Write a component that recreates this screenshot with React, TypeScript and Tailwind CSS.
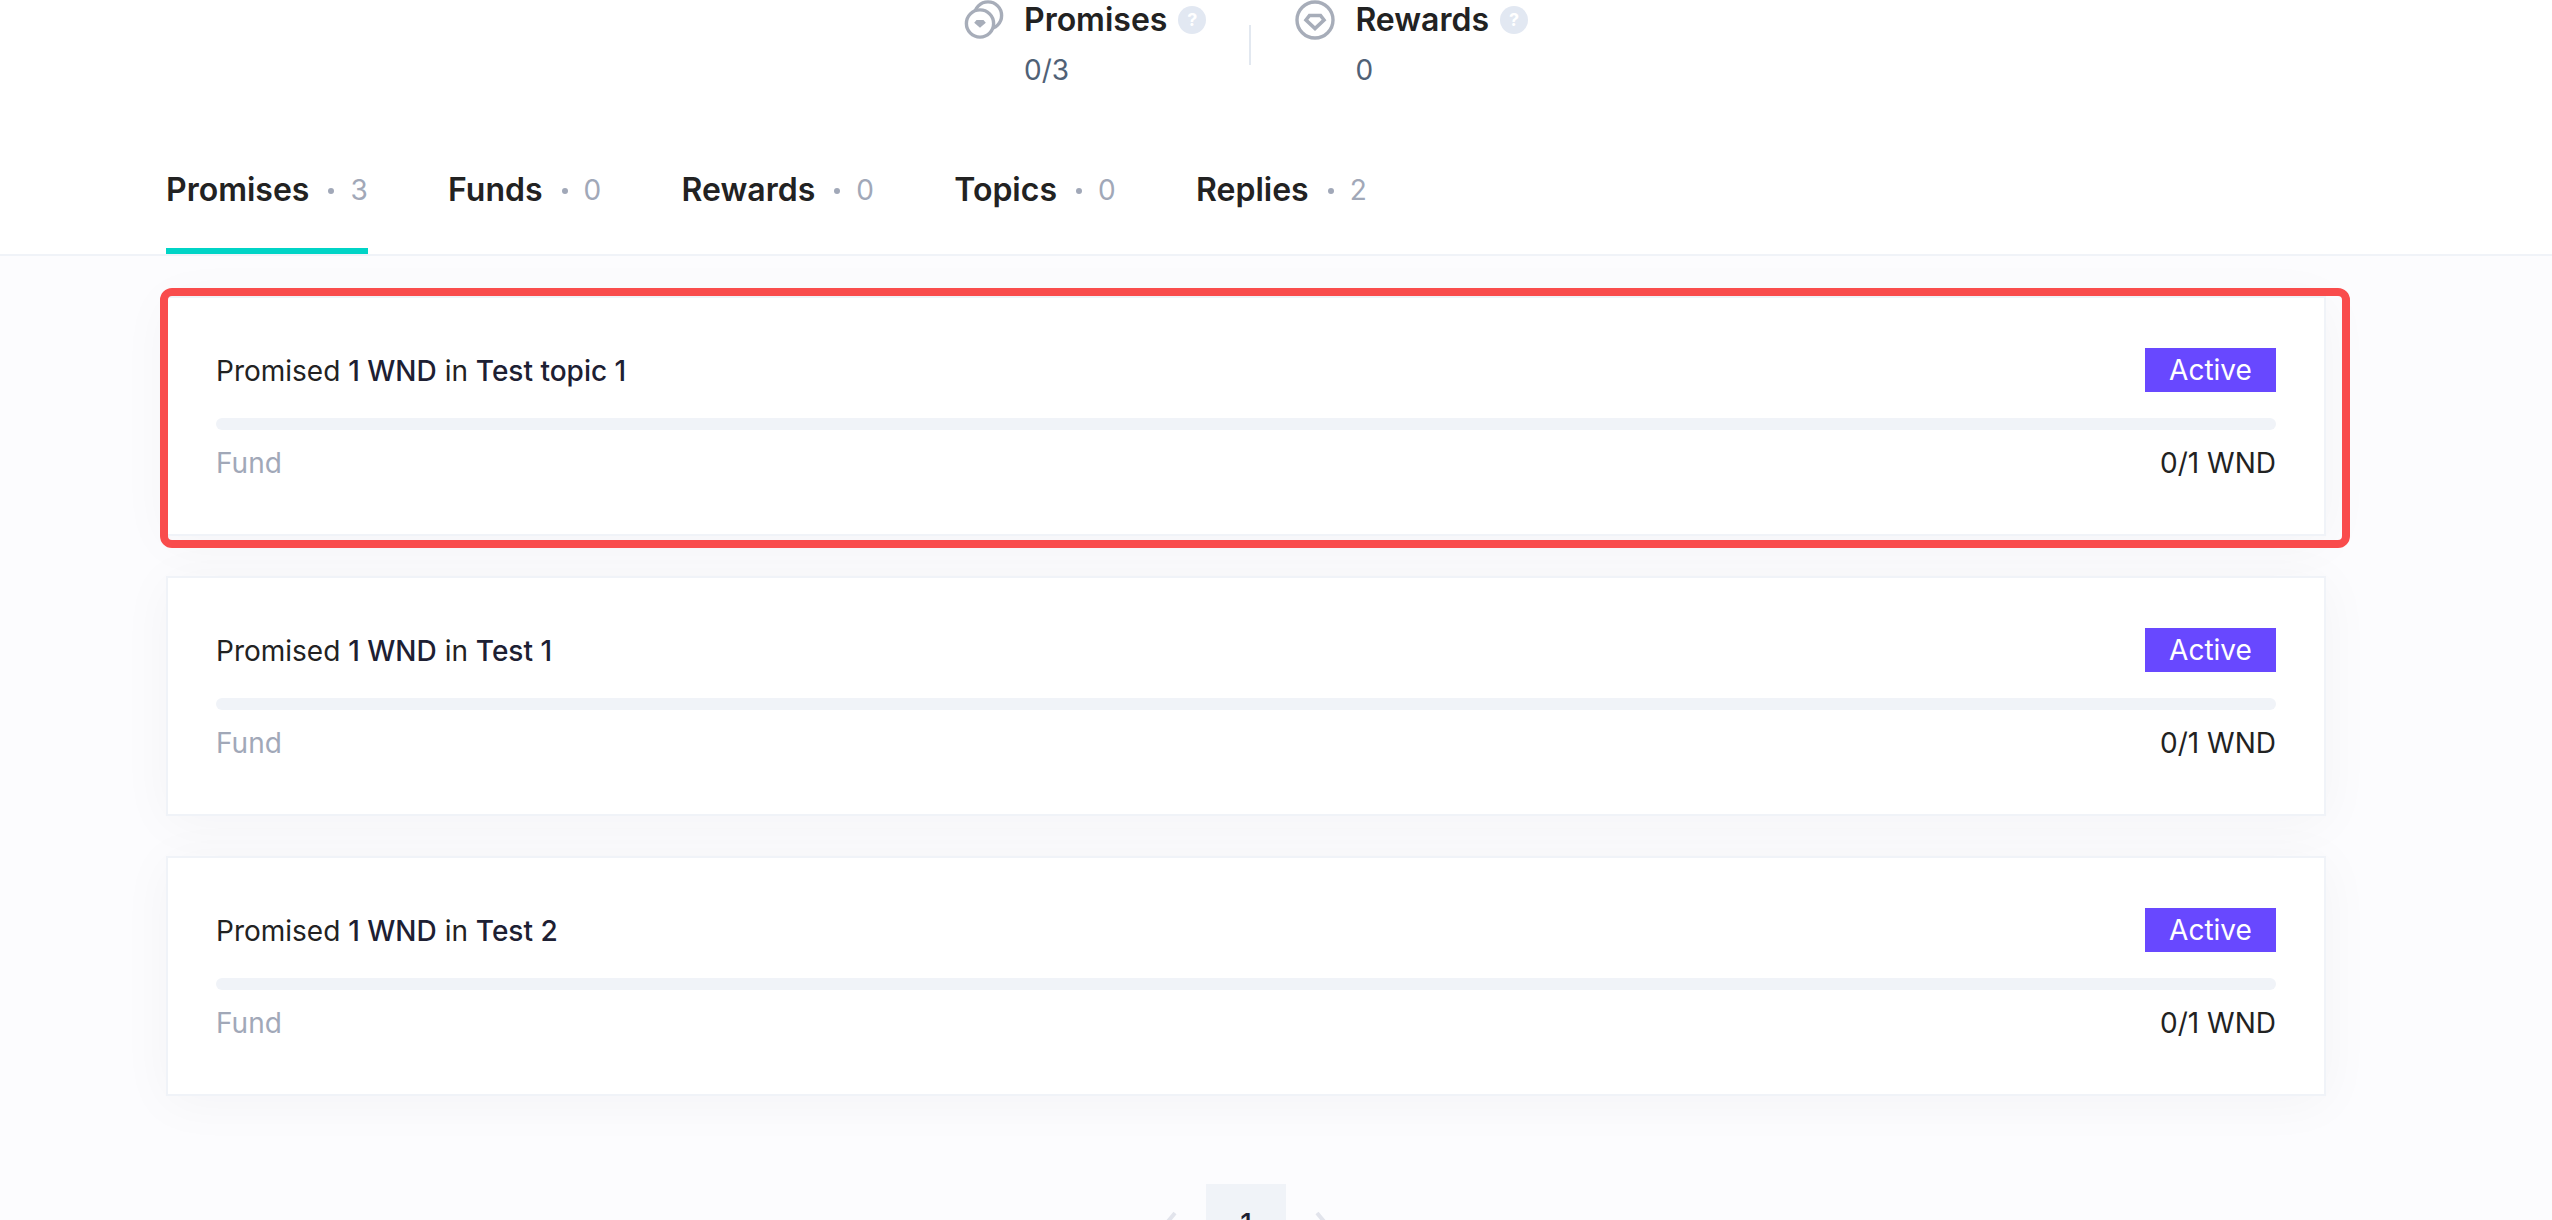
import React from "react";

function PromisesIcon() {
  return (
    <svg width="40" height="40" viewBox="0 0 40 40" fill="none" className="shrink-0">
      <circle cx="24" cy="15.5" r="13.6" stroke="#a7adb9" strokeWidth="3.4" />
      <circle cx="16" cy="23.5" r="13.6" stroke="#a7adb9" strokeWidth="3.4" fill="#fff" />
      <path d="M12.5 20h7l2.3 2.8-5.8 5-5.8-5z" fill="#a7adb9" />
    </svg>
  );
}

function RewardsIcon() {
  return (
    <svg width="40" height="40" viewBox="0 0 40 40" fill="none" className="shrink-0">
      <circle cx="20" cy="20" r="18" stroke="#a7adb9" strokeWidth="3.4" />
      <path d="M14.500 15.500h11l3.500 4.500L20 28.500 11 20z" stroke="#a7adb9" strokeWidth="3.6" strokeLinejoin="miter" />
    </svg>
  );
}

function Help() {
  return (
    <span className="w-[28px] h-[28px] rounded-full bg-[#e2e8f2] flex items-center justify-center text-white text-[18px] font-bold leading-none">
      ?
    </span>
  );
}

function Stat({ icon, title, value }: { icon: React.ReactNode; title: string; value: string }) {
  return (
    <div className="flex gap-[20px]">
      {icon}
      <div className="flex flex-col">
        <div className="flex items-center gap-[11px] h-[40px]">
          <span className="text-[32px] font-semibold text-[#222222] leading-[40px]">{title}</span>
          <Help />
        </div>
        <span className="text-[28px] text-[#506176] leading-[40px] mt-[10px]">{value}</span>
      </div>
    </div>
  );
}

function Tab({ label, count, active }: { label: string; count: number; active?: boolean }) {
  return (
    <div className={`h-[104px] pt-[20px] flex items-start border-b-[6px] ${active ? "border-[#00d4c6]" : "border-transparent"}`}>
      <span className="text-[32px] font-semibold text-[#222222] leading-[40px]">{label}</span>
      <span className="w-[6px] h-[6px] rounded-full bg-[#a1a8b8] mt-[18px] ml-[19px] mr-[16px]" />
      <span className="text-[28px] text-[#a1a8b8] leading-[40px]">{count}</span>
    </div>
  );
}

function Card({ topic, marked }: { topic: string; marked?: boolean }) {
  return (
    <div className="relative bg-white h-[240px] border-2 border-[#f0f3f8] shadow-[0_6px_50px_rgba(30,33,52,0.04)] px-[48px] pt-[50px]">
      <div className="flex items-center justify-between h-[44px]">
        <div className="text-[28px] text-[#222222] leading-[40px] pt-[1px]">
          Promised <span className="font-medium text-[#1d2033]">1 WND</span> in{" "}
          <span className="font-medium text-[#1d2033]">{topic}</span>
        </div>
        <span className="w-[131px] h-[44px] bg-[#6848ff] text-white text-[28px] leading-[44px] text-center">Active</span>
      </div>
      <div className="h-[12px] rounded-full bg-[#f0f3f8] mt-[26px]" />
      <div className="flex justify-between mt-[13px]">
        <span className="text-[28px] text-[#a1a8b8] leading-[40px]">Fund</span>
        <span className="text-[28px] text-[#222222] leading-[40px]">0/1 WND</span>
      </div>
      {marked && (
        <div className="absolute -left-[8px] -right-[26px] -top-[10px] -bottom-[14px] border-[8px] border-[#f94c4c] rounded-[12px] pointer-events-none" />
      )}
    </div>
  );
}

export default function App() {
  return (
    <div className="h-[1220px] overflow-hidden bg-[#fcfcfe] font-['Inter',sans-serif]">
      <header className="relative z-10 bg-white border-b-2 border-[#f0f3f8] h-[256px]">
        <div className="w-[2160px] ml-[166px]">
          <div className="flex justify-center items-start h-[150px]">
            <Stat icon={<PromisesIcon />} title="Promises" value="0/3" />
            <div className="w-[2px] h-[40px] bg-[#e2e8f0] mt-[25px] ml-[43px] mr-[44px]" />
            <Stat icon={<RewardsIcon />} title="Rewards" value="0" />
          </div>
          <nav className="flex gap-[80.4px]">
            <Tab label="Promises" count={3} active />
            <Tab label="Funds" count={0} />
            <Tab label="Rewards" count={0} />
            <Tab label="Topics" count={0} />
            <Tab label="Replies" count={2} />
          </nav>
        </div>
      </header>
      <main className="w-[2160px] ml-[166px] pt-[40px] flex flex-col gap-[40px]">
        <Card topic="Test topic 1" marked />
        <Card topic="Test 1" />
        <Card topic="Test 2" />
        <div className="flex justify-center items-start gap-[28px] mt-[48px]">
          <svg width="20" height="40" viewBox="0 0 20 40" fill="none" className="mt-[23px]">
            <path d="M17 6L7 18l10 12" stroke="#e2e4ec" strokeWidth="4" />
          </svg>
          <div className="w-[80px] h-[80px] bg-[#f0f3f8] flex items-center justify-center text-[28px] font-medium text-[#1d2033]">1</div>
          <svg width="20" height="40" viewBox="0 0 20 40" fill="none" className="mt-[23px]">
            <path d="M3 6l10 12L3 30" stroke="#e2e4ec" strokeWidth="4" />
          </svg>
        </div>
      </main>
    </div>
  );
}
